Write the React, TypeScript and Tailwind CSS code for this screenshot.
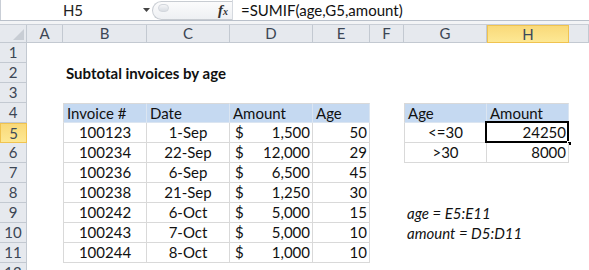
import React from "react";

const colClasses = ["", "A", "B", "C", "D", "E", "F", "G", "H", ""];

type Cell = {
  text?: React.ReactNode;
  align?: "l" | "c" | "r";
  kind?: "th" | "td" | "none";
  bold?: boolean;
  italic?: boolean;
  money?: [string, string];
};

const tableData: [string, string, string, string][] = [
  ["100123", "1-Sep", "1,500", "50"],
  ["100234", "22-Sep", "12,000", "29"],
  ["100236", "6-Sep", "6,500", "45"],
  ["100238", "21-Sep", "1,250", "30"],
  ["100242", "6-Oct", "5,000", "15"],
  ["100243", "7-Oct", "5,000", "10"],
  ["100244", "8-Oct", "1,000", "10"],
];

function getCell(row: number, col: number): Cell {
  if (row === 2 && col === 2) return { text: "Subtotal invoices by age", bold: true, align: "l" };
  if (row === 4) {
    if (col === 2) return { text: "Invoice #", kind: "th", align: "l" };
    if (col === 3) return { text: "Date", kind: "th", align: "l" };
    if (col === 4) return { text: "Amount", kind: "th", align: "l" };
    if (col === 5) return { text: "Age", kind: "th", align: "l" };
    if (col === 7) return { text: "Age", kind: "th", align: "l" };
    if (col === 8) return { text: "Amount", kind: "th", align: "l" };
  }
  if (row >= 5 && row <= 11) {
    const d = tableData[row - 5];
    if (col === 2) return { text: d[0], kind: "td", align: "c" };
    if (col === 3) return { text: d[1], kind: "td", align: "c" };
    if (col === 4) return { money: ["$", d[2]], kind: "td" };
    if (col === 5) return { text: d[3], kind: "td", align: "r" };
  }
  if (row === 5 && col === 7) return { text: "<=30", kind: "td", align: "c" };
  if (row === 5 && col === 8) return { text: "24250", kind: "td", align: "r" };
  if (row === 6 && col === 7) return { text: ">30", kind: "td", align: "c" };
  if (row === 6 && col === 8) return { text: "8000", kind: "td", align: "r" };
  if (row === 9 && col === 7) return { text: "age = E5:E11", italic: true, align: "l" };
  if (row === 10 && col === 7) return { text: "amount = D5:D11", italic: true, align: "l" };
  return {};
}

function DataCell({ row, col }: { row: number; col: number }) {
  const c = getCell(row, col);
  const isTable = c.kind === "th" || c.kind === "td";
  const firstCol = isTable && (col === 2 || col === 7);
  const firstRow = isTable && row === 4;
  const selected = row === 5 && col === 8;

  let cls = "relative flex items-center whitespace-nowrap text-[15px] leading-none text-[#111]";
  if (c.kind === "th") cls += " bg-[#c5d9f1] border-r border-b border-[#dbe5f1]";
  if (c.kind === "td") cls += " bg-white border-r border-b border-[#d9d9d9]";
  if (firstCol && c.kind === "th") cls += " border-l border-l-[#d9d9d9]";
  if (firstCol && c.kind === "td") cls += " border-l";
  if (firstRow) cls += " border-t border-t-[#d9d9d9]";
  if (c.align === "l") cls += " justify-start pl-[3px]";
  if (c.align === "c") cls += " justify-center";
  if (c.align === "r") cls += " justify-end pr-[2px]";
  if (c.bold) cls += " font-bold text-[15.5px]";
  if (c.italic) cls += " italic";
  if (!isTable) cls += " overflow-visible z-10";

  return (
    <div className={cls}>
      {c.money ? (
        <div className="flex w-full justify-between pl-[5px] pr-[2px]">
          <span>{c.money[0]}</span>
          <span>{c.money[1]}</span>
        </div>
      ) : (
        c.text
      )}
      {selected && (
        <>
          <div className="absolute left-[-2px] top-[-2px] right-[-1px] bottom-[-1px] border-2 border-black pointer-events-none" />
          <div className="absolute right-[-4px] bottom-[-4px] w-[5px] h-[5px] bg-black border border-white pointer-events-none" />
        </>
      )}
    </div>
  );
}

export default function App() {
  const rows = Array.from({ length: 12 }, (_, i) => i + 1);
  const cols = [1, 2, 3, 4, 5, 6, 7, 8, 9];
  return (
    <div className="w-[589px] h-[270px] overflow-hidden bg-white font-['Lato',sans-serif] text-[#111]">
      {/* Formula bar */}
      <div className="flex h-[20px] items-center bg-white border-l border-[#c9ced6]">
        <div className="w-[139px] flex justify-center text-[15px] leading-none text-[#222] pl-[5px]">H5</div>
        <div className="w-[12px] flex justify-center items-center">
          <svg width="7" height="4" viewBox="0 0 7 4">
            <path d="M0 0 L7 0 L3.5 4 Z" fill="#444" />
          </svg>
        </div>
        <div className="relative w-[80px] h-[19px] mt-[1px] rounded-l-full border border-r-0 border-[#c8ccd2] bg-gradient-to-b from-[#fbfbfc] to-[#eef0f3] flex items-center justify-end pr-[4px]">
          <div className="absolute left-[5px] top-[2px] w-[11px] h-[8px] rounded-full bg-gradient-to-b from-[#f4f5f7] to-[#d9dde3] border border-[#d3d7dd]" />
          <span className="font-['Liberation_Serif',serif] italic font-bold text-[15px] leading-none text-[#333]">
            f<span className="text-[10px] align-baseline">x</span>
          </span>
        </div>
        <div className="flex-1 h-[20px] flex items-center pl-[8px] text-[15px] leading-none text-[#111] bg-white border-l border-[#d5d9df]">
          =SUMIF(age,G5,amount)
        </div>
      </div>
      {/* separator */}
      <div className="h-[5px] border-t border-[#b9c0ca] bg-[#f3f4f6] border-b border-b-[#c9ced6]" />
      {/* Grid */}
      <div className="grid grid-cols-[27px_36px_84px_83px_83px_57px_34px_83px_82px_20px] grid-rows-[18px_repeat(12,20px)]">
        <div className="relative bg-[#e6e9ee] border-r border-b border-[#c3c9d1]">
          <svg className="absolute right-[2px] bottom-[2px]" width="11" height="11" viewBox="0 0 11 11">
            <path d="M11 0 L11 11 L0 11 Z" fill="#c8cdd4" />
          </svg>
        </div>
        {colClasses.slice(1).map((c, i) =>
          c === "H" ? (
            <div
              key={i}
              className="flex items-center justify-center text-[15px] leading-none text-[#3b4a5a] bg-gradient-to-b from-[#f9d979] to-[#fde894] border border-[#f0c350]"
            >
              {c}
            </div>
          ) : (
            <div
              key={i}
              className="flex items-center justify-center text-[15px] leading-none text-[#3c4654] bg-[#e6e9ee] border-r border-b border-[#c3c9d1]"
            >
              {c}
            </div>
          )
        )}
        {rows.map((r) => (
          <React.Fragment key={r}>
            {r === 5 ? (
              <div className="flex items-center justify-center text-[15px] leading-none text-[#3b4a5a] bg-gradient-to-b from-[#f9d979] to-[#fde894] border border-[#f0c350]">
                {r}
              </div>
            ) : (
              <div className="flex items-center justify-center text-[15px] leading-none text-[#3c4654] bg-[#e6e9ee] border-r border-b border-[#c3c9d1]">
                {r}
              </div>
            )}
            {cols.map((c) => (
              <DataCell key={c} row={r} col={c} />
            ))}
          </React.Fragment>
        ))}
      </div>
    </div>
  );
}
